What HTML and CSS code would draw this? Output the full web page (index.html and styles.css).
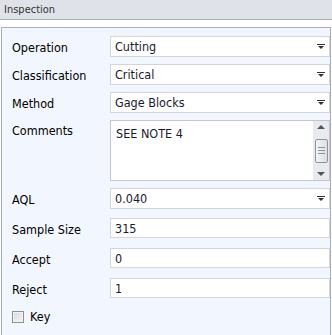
FILE: index.html
```html
<!DOCTYPE html>
<html lang="en">
<head>
  <meta charset="UTF-8">
  <title>Inspection</title>
  <link rel="stylesheet" href="styles.css">
</head>
<body>
  <div class="header">Inspection</div>
  <div class="panel">
    <div class="row">
      <label class="label">Operation</label>
      <div class="field select"><span>Cutting</span><i class="arrow"></i></div>
    </div>
    <div class="row">
      <label class="label">Classification</label>
      <div class="field select"><span>Critical</span><i class="arrow"></i></div>
    </div>
    <div class="row">
      <label class="label">Method</label>
      <div class="field select"><span>Gage Blocks</span><i class="arrow"></i></div>
    </div>
    <div class="row row-top">
      <label class="label">Comments</label>
      <div class="field memo">
        <div class="memo-text">SEE NOTE 4</div>
        <div class="scrollbar">
          <svg class="sb-btn" width="16" height="12" viewBox="0 0 16 12"><path d="M4 8 L8 4 L12 8 Z" fill="#555"/></svg>
          <div class="thumb"><i></i><i></i><i></i></div>
          <svg class="sb-btn" width="16" height="12" viewBox="0 0 16 12"><path d="M4 4 L12 4 L8 8 Z" fill="#555"/></svg>
        </div>
      </div>
    </div>
    <div class="row row-last-select">
      <label class="label">AQL</label>
      <div class="field select"><span>0.040</span><i class="arrow"></i></div>
    </div>
    <div class="row text-row">
      <label class="label">Sample Size</label>
      <div class="field text"><span>315</span></div>
    </div>
    <div class="row text-row">
      <label class="label">Accept</label>
      <div class="field text"><span>0</span></div>
    </div>
    <div class="row text-row">
      <label class="label">Reject</label>
      <div class="field text"><span>1</span></div>
    </div>
    <div class="check-row">
      <span class="checkbox"></span>
      <span>Key</span>
    </div>
  </div>
</body>
</html>
```

FILE: styles.css
```css
body {
  margin: 0;
  font-family: "DejaVu Sans Condensed", "DejaVu Sans", Verdana, sans-serif;
  font-size: 12.5px;
  color: #000;
  background-color: #fff;
  height: 335px;
  display: flex;
  flex-direction: column;
}

.header {
  height: 19px;
  line-height: 19px;
  padding-left: 4px;
  background-color: #dfe3e9;
  border-bottom: 1px solid #abb0b8;
  color: #333;
  font-size: 11px;
  flex: none;
}

.panel {
  flex: 1;
  margin: 7px 1px 0 1px;
  border: 1px solid #a6abc6;
  border-bottom: none;
  background-color: #f2f6fe;
  padding: 8px 0 0 10px;
  display: flex;
  flex-direction: column;
}

.row {
  display: flex;
  align-items: center;
  margin-bottom: 7px;
}

.row-top {
  align-items: flex-start;
}

.row-last-select {
  margin-bottom: 9px;
}

.text-row {
  margin-bottom: 10px;
}

.label {
  width: 98px;
  flex: none;
  position: relative;
  top: 1px;
}

.row-top .label {
  padding-top: 2px;
}

.field {
  flex: 1;
  background-color: #fff;
  border: 1px solid #d3d5da;
  box-sizing: border-box;
  color: #1a1a2e;
  display: flex;
  align-items: center;
}

.select {
  height: 21px;
  padding-left: 4px;
}

.select span {
  flex: 1;
}

.arrow {
  width: 0;
  height: 0;
  margin-right: 5px;
  border-left: 3.5px solid transparent;
  border-right: 3.5px solid transparent;
  border-top: 3.5px solid #333;
  position: relative;
  top: 1px;
}

.arrow::before {
  content: "";
  position: absolute;
  left: -4px;
  top: -5.5px;
  width: 8px;
  height: 1px;
  background-color: #333;
}

.text {
  height: 20px;
  padding-left: 4px;
}

.memo {
  height: 61px;
  align-items: stretch;
  border-color: #c4c6cc;
}

.memo-text {
  flex: 1;
  padding: 5px 0 0 5px;
}

.scrollbar {
  width: 16px;
  background-color: #e9eaee;
  display: flex;
  flex-direction: column;
  align-items: center;
  justify-content: space-between;
}

.sb-btn {
  display: block;
}

.thumb {
  width: 13px;
  height: 24px;
  border: 1px solid #8f949c;
  border-radius: 2px;
  box-sizing: border-box;
  background: linear-gradient(to right, #f4f5f7, #dcdee3);
  display: flex;
  flex-direction: column;
  align-items: center;
  justify-content: center;
  gap: 2px;
}

.thumb i {
  width: 7px;
  height: 1px;
  background-color: #8f949c;
}

.check-row {
  display: flex;
  align-items: center;
  gap: 6px;
  margin-top: 1px;
}

.checkbox {
  width: 12px;
  height: 12px;
  box-sizing: border-box;
  border: 1px solid #8e8f8f;
  background: linear-gradient(135deg, #dcdcdc, #f2f2f2);
  box-shadow: inset 0 0 0 1px #f4f4f4;
}
```
